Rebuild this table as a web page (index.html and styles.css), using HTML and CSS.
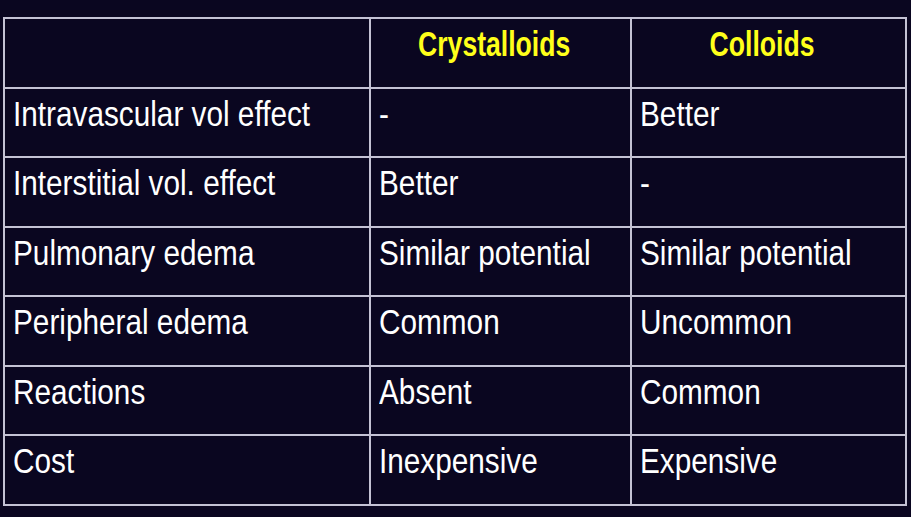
FILE: index.html
```html
<!DOCTYPE html>
<html>
<head>
<meta charset="utf-8">
<link rel="stylesheet" href="styles.css">
</head>
<body>
<div class="grid">
  <div class="cell"></div>
  <div class="cell head"><span class="t">Crystalloids</span></div>
  <div class="cell head"><span class="t">Colloids</span></div>

  <div class="cell"><span class="t">Intravascular vol effect</span></div>
  <div class="cell"><span class="t">-</span></div>
  <div class="cell"><span class="t">Better</span></div>

  <div class="cell"><span class="t">Interstitial vol. effect</span></div>
  <div class="cell"><span class="t">Better</span></div>
  <div class="cell"><span class="t">-</span></div>

  <div class="cell"><span class="t">Pulmonary edema</span></div>
  <div class="cell"><span class="t">Similar potential</span></div>
  <div class="cell"><span class="t">Similar potential</span></div>

  <div class="cell"><span class="t">Peripheral edema</span></div>
  <div class="cell"><span class="t">Common</span></div>
  <div class="cell"><span class="t">Uncommon</span></div>

  <div class="cell"><span class="t">Reactions</span></div>
  <div class="cell"><span class="t">Absent</span></div>
  <div class="cell"><span class="t">Common</span></div>

  <div class="cell"><span class="t">Cost</span></div>
  <div class="cell"><span class="t">Inexpensive</span></div>
  <div class="cell"><span class="t">Expensive</span></div>
</div>
</body>
</html>
```
FILE: styles.css
```css
html, body {
  margin: 0;
  padding: 0;
  background: #0a0620;
  width: 911px;
  height: 517px;
  overflow: hidden;
}
body {
  padding: 17px 0 0 3px;
  box-sizing: border-box;
  font-family: "Liberation Sans", Arial, sans-serif;
}
.grid {
  display: grid;
  grid-template-columns: 364px 259px 273px;
  grid-template-rows: repeat(7, 1fr);
  gap: 2px;
  padding: 2px;
  width: 904px;
  height: 489px;
  box-sizing: border-box;
  background: #c4c2d4;
}
.cell {
  background: #0a0620;
  color: #ffffff;
  font-size: 35px;
  line-height: 40px;
  padding: 5px 8px 0;
  white-space: nowrap;
}
.t {
  display: inline-block;
  transform: scaleX(0.85);
  transform-origin: left center;
}
.head {
  color: #ffff1a;
  font-weight: bold;
  text-align: center;
  padding-right: 20px;
}
.head .t {
  transform: scaleX(0.76);
  transform-origin: center center;
}
```
